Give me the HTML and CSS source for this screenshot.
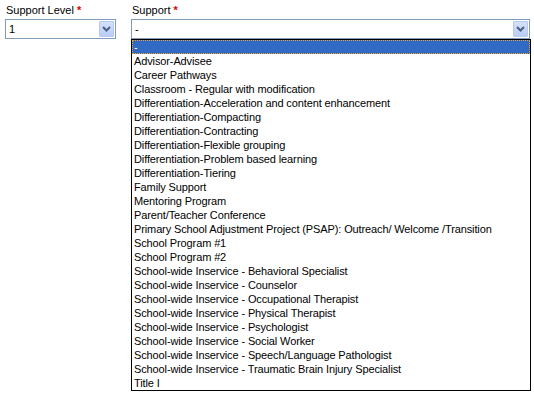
FILE: index.html
```html
<!DOCTYPE html>
<html>
<head>
<meta charset="utf-8">
<link rel="stylesheet" href="styles.css">
</head>
<body>
<div class="form">
  <div class="field level">
    <div class="label">Support Level <span class="req">*</span></div>
    <div class="select">
      <span class="value">1</span>
      <span class="btn"><svg width="9" height="6" viewBox="0 0 9 6"><path d="M1 1 L4.5 4.5 L8 1" fill="none" stroke="#4d6185" stroke-width="2"/></svg></span>
    </div>
  </div>
  <div class="field support">
    <div class="label">Support <span class="req">*</span></div>
    <div class="select">
      <span class="value">-</span>
      <span class="btn"><svg width="9" height="6" viewBox="0 0 9 6"><path d="M1 1 L4.5 4.5 L8 1" fill="none" stroke="#4d6185" stroke-width="2"/></svg></span>
    </div>
    <div class="list">
      <div class="opt sel">-</div>
      <div class="opt">Advisor-Advisee</div>
      <div class="opt">Career Pathways</div>
      <div class="opt">Classroom - Regular with modification</div>
      <div class="opt">Differentiation-Acceleration and content enhancement</div>
      <div class="opt">Differentiation-Compacting</div>
      <div class="opt">Differentiation-Contracting</div>
      <div class="opt">Differentiation-Flexible grouping</div>
      <div class="opt">Differentiation-Problem based learning</div>
      <div class="opt">Differentiation-Tiering</div>
      <div class="opt">Family Support</div>
      <div class="opt">Mentoring Program</div>
      <div class="opt">Parent/Teacher Conference</div>
      <div class="opt">Primary School Adjustment Project (PSAP): Outreach/ Welcome /Transition</div>
      <div class="opt">School Program #1</div>
      <div class="opt">School Program #2</div>
      <div class="opt">School-wide Inservice - Behavioral Specialist</div>
      <div class="opt">School-wide Inservice - Counselor</div>
      <div class="opt">School-wide Inservice - Occupational Therapist</div>
      <div class="opt">School-wide Inservice - Physical Therapist</div>
      <div class="opt">School-wide Inservice - Psychologist</div>
      <div class="opt">School-wide Inservice - Social Worker</div>
      <div class="opt">School-wide Inservice - Speech/Language Pathologist</div>
      <div class="opt">School-wide Inservice - Traumatic Brain Injury Specialist</div>
      <div class="opt">Title I</div>
    </div>
  </div>
</div>
</body>
</html>
```
FILE: styles.css
```css
html, body {
  margin: 0;
  padding: 0;
  background: #fff;
}
body {
  font-family: "Liberation Sans", Arial, sans-serif;
  font-size: 11px;
  color: #000;
  min-height: 394px;
}
.form {
  display: flex;
  align-items: flex-start;
  gap: 15px;
  padding: 4px 0 0 5px;
}
.field {
  display: flex;
  flex-direction: column;
}
.label {
  font-size: 11px;
  line-height: 13px;
  height: 15px;
  padding-left: 1px;
}
.req {
  color: #e00000;
  font-weight: bold;
}
.select {
  box-sizing: border-box;
  height: 20px;
  border: 1px solid #7f9db9;
  display: flex;
  align-items: center;
  justify-content: space-between;
  background: #fff;
}
.level .select { width: 111px; }
.support .select { width: 399px; }
.value {
  padding-left: 3px;
  font-size: 11px;
}
.btn {
  box-sizing: border-box;
  width: 15px;
  height: 16px;
  margin-right: 1px;
  border: 1px solid #b8c9ee;
  border-radius: 1px;
  background: linear-gradient(#d5e1fb, #b9cdf6);
  display: flex;
  align-items: center;
  justify-content: center;
}
.list {
  box-sizing: border-box;
  width: 400px;
  border: 1px solid #000;
  background: #fff;
  display: flex;
  flex-direction: column;
}
.opt {
  height: 14px;
  line-height: 14px;
  padding-left: 2px;
  white-space: nowrap;
  font-size: 11px;
  letter-spacing: -0.12px;
}
.opt.sel {
  background: #316ac5;
  color: #fff;
  outline: 1px dotted #e8a33a;
  outline-offset: -1px;
}
```
